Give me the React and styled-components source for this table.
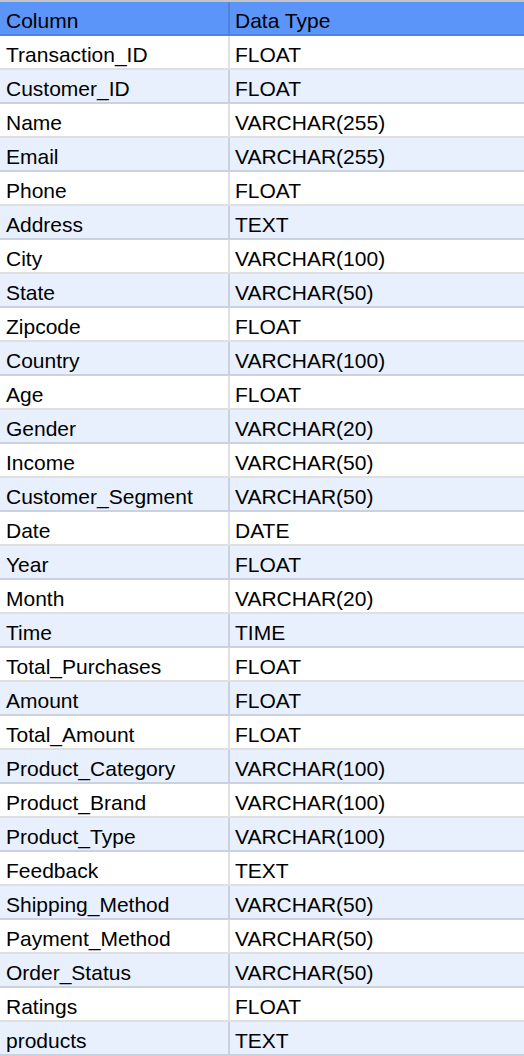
import React from 'react';
import styled, { createGlobalStyle } from 'styled-components';

const GlobalStyle = createGlobalStyle`
  html, body {
    margin: 0;
    padding: 0;
    background: #ffffff;
  }
  body {
    font-family: "Liberation Sans", Arial, Helvetica, sans-serif;
    color: #000;
  }
`;

const columns = [
  ['Transaction_ID', 'FLOAT'],
  ['Customer_ID', 'FLOAT'],
  ['Name', 'VARCHAR(255)'],
  ['Email', 'VARCHAR(255)'],
  ['Phone', 'FLOAT'],
  ['Address', 'TEXT'],
  ['City', 'VARCHAR(100)'],
  ['State', 'VARCHAR(50)'],
  ['Zipcode', 'FLOAT'],
  ['Country', 'VARCHAR(100)'],
  ['Age', 'FLOAT'],
  ['Gender', 'VARCHAR(20)'],
  ['Income', 'VARCHAR(50)'],
  ['Customer_Segment', 'VARCHAR(50)'],
  ['Date', 'DATE'],
  ['Year', 'FLOAT'],
  ['Month', 'VARCHAR(20)'],
  ['Time', 'TIME'],
  ['Total_Purchases', 'FLOAT'],
  ['Amount', 'FLOAT'],
  ['Total_Amount', 'FLOAT'],
  ['Product_Category', 'VARCHAR(100)'],
  ['Product_Brand', 'VARCHAR(100)'],
  ['Product_Type', 'VARCHAR(100)'],
  ['Feedback', 'TEXT'],
  ['Shipping_Method', 'VARCHAR(50)'],
  ['Payment_Method', 'VARCHAR(50)'],
  ['Order_Status', 'VARCHAR(50)'],
  ['Ratings', 'FLOAT'],
  ['products', 'TEXT'],
];

const rowColors = {
  header: '#5b95f9',
  plain: '#ffffff',
  alt: '#e8f0fe',
};

const Sheet = styled.div`
  width: 524px;
  border-top: 2px solid #c6c6c6;
`;

const Row = styled.div`
  display: grid;
  grid-template-columns: 230px 1fr;
  background: ${(p) => rowColors[p.$variant]};
`;

const Cell = styled.div`
  box-sizing: border-box;
  height: 34px;
  padding: 0 5px 1px 6px;
  display: flex;
  align-items: flex-end;
  font-size: 21px;
  line-height: 24px;
  white-space: nowrap;
  overflow: hidden;
  border-bottom: 2px solid rgba(0, 0, 0, 0.12);

  &:first-child {
    border-right: 2px solid rgba(0, 0, 0, 0.12);
  }

  &:last-child {
    padding-left: 5px;
  }
`;

const App = () => (
  <>
    <GlobalStyle />
    <Sheet>
      <Row $variant="header">
        <Cell>Column</Cell>
        <Cell>Data Type</Cell>
      </Row>
      {columns.map(([name, type], i) => (
        <Row key={name} $variant={i % 2 === 0 ? 'plain' : 'alt'}>
          <Cell>{name}</Cell>
          <Cell>{type}</Cell>
        </Row>
      ))}
    </Sheet>
  </>
);

export default App;
